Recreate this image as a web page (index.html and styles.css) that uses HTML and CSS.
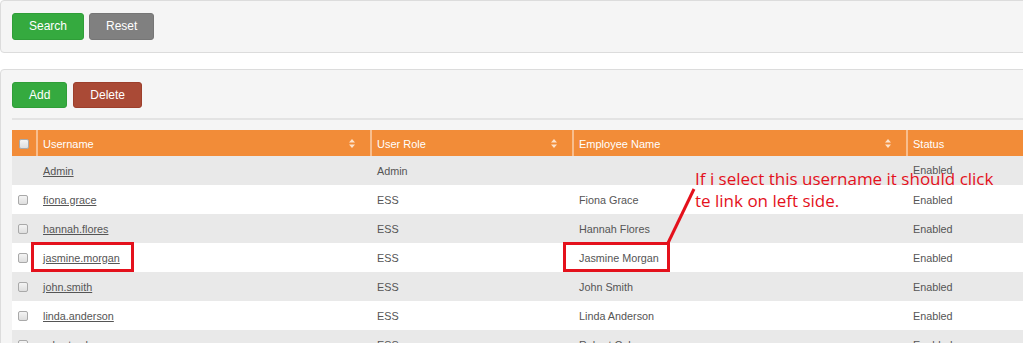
FILE: index.html
```html
<!DOCTYPE html>
<html>
<head>
<meta charset="utf-8">
<link rel="stylesheet" href="styles.css">
</head>
<body>
<div class="page">
  <div class="panel panel-search">
    <div class="btn-row">
      <button class="btn btn-green">Search</button>
      <button class="btn btn-grey">Reset</button>
    </div>
  </div>

  <div class="panel panel-list">
    <div class="btn-row btn-row-list">
      <button class="btn btn-green">Add</button>
      <button class="btn btn-red">Delete</button>
    </div>
    <div class="sep"></div>
    <div class="table-wrap">
      <table class="grid">
        <colgroup>
          <col class="c-chk"><col class="c-user"><col class="c-role"><col class="c-emp"><col class="c-status">
        </colgroup>
        <thead>
          <tr>
            <th class="chk"><span class="cb"></span></th>
            <th><div class="th-in"><span>Username</span><svg class="sort" viewBox="0 0 6 9"><path d="M3 0L6 3.5H0Z M3 9L6 5.5H0Z"/></svg></div></th>
            <th><div class="th-in"><span>User Role</span><svg class="sort" viewBox="0 0 6 9"><path d="M3 0L6 3.5H0Z M3 9L6 5.5H0Z"/></svg></div></th>
            <th><div class="th-in"><span>Employee Name</span><svg class="sort" viewBox="0 0 6 9"><path d="M3 0L6 3.5H0Z M3 9L6 5.5H0Z"/></svg></div></th>
            <th><div class="th-in"><span>Status</span></div></th>
          </tr>
        </thead>
        <tbody>
          <tr><td class="chk"></td><td><a href="#">Admin</a></td><td>Admin</td><td></td><td class="st-top">Enabled</td></tr>
          <tr><td class="chk"><span class="cb"></span></td><td><a href="#">fiona.grace</a></td><td>ESS</td><td>Fiona Grace</td><td>Enabled</td></tr>
          <tr><td class="chk"><span class="cb"></span></td><td><a href="#">hannah.flores</a></td><td>ESS</td><td>Hannah Flores</td><td>Enabled</td></tr>
          <tr><td class="chk"><span class="cb"></span></td><td><a href="#">jasmine.morgan</a></td><td>ESS</td><td>Jasmine Morgan</td><td>Enabled</td></tr>
          <tr><td class="chk"><span class="cb"></span></td><td><a href="#">john.smith</a></td><td>ESS</td><td>John Smith</td><td>Enabled</td></tr>
          <tr><td class="chk"><span class="cb"></span></td><td><a href="#">linda.anderson</a></td><td>ESS</td><td>Linda Anderson</td><td>Enabled</td></tr>
          <tr><td class="chk"><span class="cb"></span></td><td><a href="#">robert.cole</a></td><td>ESS</td><td>Robert Cole</td><td>Enabled</td></tr>
        </tbody>
      </table>
    </div>
  </div>

  <div class="mark mark-user"></div>
  <div class="mark mark-emp"></div>
  <svg class="pointer" width="1023" height="343" viewBox="0 0 1023 343"><line x1="668" y1="243" x2="694" y2="189" stroke="#e4111c" stroke-width="3"/></svg>
  <div class="note">If i select this username it should click<br>te link on left side.</div>
</div>
</body>
</html>
```

FILE: styles.css
```css
html, body {
  margin: 0;
  padding: 0;
  background: #ffffff;
  overflow: hidden;
}
.page {
  position: relative;
  width: 1023px;
  height: 343px;
  overflow: hidden;
  font-family: "Liberation Sans", Arial, sans-serif;
}
.panel {
  background: #f5f5f5;
  border: 1px solid #dcdcdc;
  border-radius: 4px;
  margin-right: -10px;
}
.panel-search {
  box-sizing: border-box;
  height: 53px;
  padding: 12px 0 0 11px;
}
.panel-list {
  margin-top: 16px;
  padding: 12px 0 0 11px;
  height: 400px;
}
.btn-row {
  display: flex;
  gap: 5px;
}
.btn-row-list {
  gap: 6px;
}
.btn {
  font-family: "Liberation Sans", Arial, sans-serif;
  font-size: 12px;
  color: #fff;
  height: 27px;
  padding: 0 16px;
  border-radius: 3px;
  border: 1px solid transparent;
  line-height: 25px;
  cursor: pointer;
}
.btn-row-list .btn {
  height: 26px;
  line-height: 24px;
}
.btn-green {
  background: #35aa3f;
  border-color: #2f9e38;
}
.btn-grey {
  background: #808080;
  border-color: #767676;
}
.btn-red {
  background: #aa4a36;
  border-color: #9d3f2c;
}
.sep {
  height: 0;
  border-top: 2px solid #e3e3e3;
  margin: 10px 0 10px 0;
}
.table-wrap {
  overflow: hidden;
}
.grid {
  border-collapse: collapse;
  table-layout: fixed;
  width: 1120px;
  font-size: 10.8px;
  color: #555;
}
.c-chk { width: 25px; }
.c-user { width: 334px; }
.c-role { width: 202px; }
.c-emp { width: 334px; }
.c-status { width: 225px; }
.grid thead th {
  background: #f28c38;
  color: #fff;
  font-weight: normal;
  text-align: left;
  height: 26px;
  padding: 1px 0 0 0;
  box-sizing: border-box;
  font-size: 11px;
  border-left: 2px solid #f8be8e;
}
.grid thead th:first-child {
  border-left: none;
}
.th-in {
  display: flex;
  align-items: center;
  justify-content: space-between;
  padding: 0 15px 0 5px;
}
.sort {
  width: 6px;
  height: 9px;
  fill: #fde3cc;
}
.grid tbody td {
  height: 29px;
  padding: 0 0 0 6px;
  white-space: nowrap;
}
.grid tbody td.st-top {
  vertical-align: top;
  padding-top: 8px;
  height: 21px;
}
.grid tbody tr:nth-child(odd) {
  background: #e9e9e9;
}
.grid tbody tr:nth-child(even) {
  background: #ffffff;
}
.grid td.chk {
  padding: 0 0 0 6px;
}
.grid th.chk {
  padding-left: 7px;
}
.cb {
  display: block;
  width: 8px;
  height: 8px;
  border: 1px solid #a9a9a9;
  border-radius: 2px;
  background: linear-gradient(#f4f4f4, #dedede);
}
.grid a {
  color: #555;
  text-decoration: underline;
}
.mark {
  position: absolute;
  border: 3px solid #e4111c;
  box-sizing: border-box;
  height: 30px;
  top: 242px;
}
.mark-user {
  left: 31px;
  width: 103px;
}
.mark-emp {
  left: 563px;
  width: 107px;
}
.pointer {
  position: absolute;
  left: 0;
  top: 0;
  pointer-events: none;
}
.note {
  position: absolute;
  left: 695px;
  top: 168px;
  font-family: "Open Sans", "Liberation Sans", sans-serif;
  font-size: 17px;
  line-height: 22px;
  color: #e4111c;
  white-space: nowrap;
}
```
